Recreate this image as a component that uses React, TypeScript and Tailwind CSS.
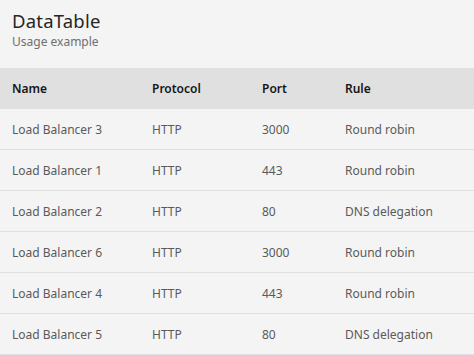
const rows = [
  { name: "Load Balancer 3", protocol: "HTTP", port: "3000", rule: "Round robin" },
  { name: "Load Balancer 1", protocol: "HTTP", port: "443", rule: "Round robin" },
  { name: "Load Balancer 2", protocol: "HTTP", port: "80", rule: "DNS delegation" },
  { name: "Load Balancer 6", protocol: "HTTP", port: "3000", rule: "Round robin" },
  { name: "Load Balancer 4", protocol: "HTTP", port: "443", rule: "Round robin" },
  { name: "Load Balancer 5", protocol: "HTTP", port: "80", rule: "DNS delegation" },
];

const cols = "grid grid-cols-[140px_110px_83px_1fr] items-center";

export default function App() {
  return (
    <div className="h-[355px] w-[474px] overflow-hidden bg-[#f4f4f4] font-['Noto_Sans',sans-serif]">
      <div className="h-[68px] px-3 pt-[10px]">
        <h1 className="text-[18.5px] leading-[22px] tracking-[0.2px] text-[#262626]">DataTable</h1>
        <p className="mt-[2px] text-[12px] leading-[16px] text-[#6f6f6f]">Usage example</p>
      </div>
      <div className={`${cols} h-[41px] bg-[#e0e0e0] text-[12px] font-semibold text-[#161616]`}>
        <div className="px-3">Name</div>
        <div className="px-3">Protocol</div>
        <div className="px-3">Port</div>
        <div className="px-3">Rule</div>
      </div>
      {rows.map((row) => (
        <div
          key={row.name}
          className={`${cols} h-[41px] border-b border-[#e0e0e0] pt-[1px] text-[12px] text-[#5a5a5a]`}
        >
          <div className="px-3">{row.name}</div>
          <div className="px-3">{row.protocol}</div>
          <div className="px-3">{row.port}</div>
          <div className="px-3">{row.rule}</div>
        </div>
      ))}
    </div>
  );
}
